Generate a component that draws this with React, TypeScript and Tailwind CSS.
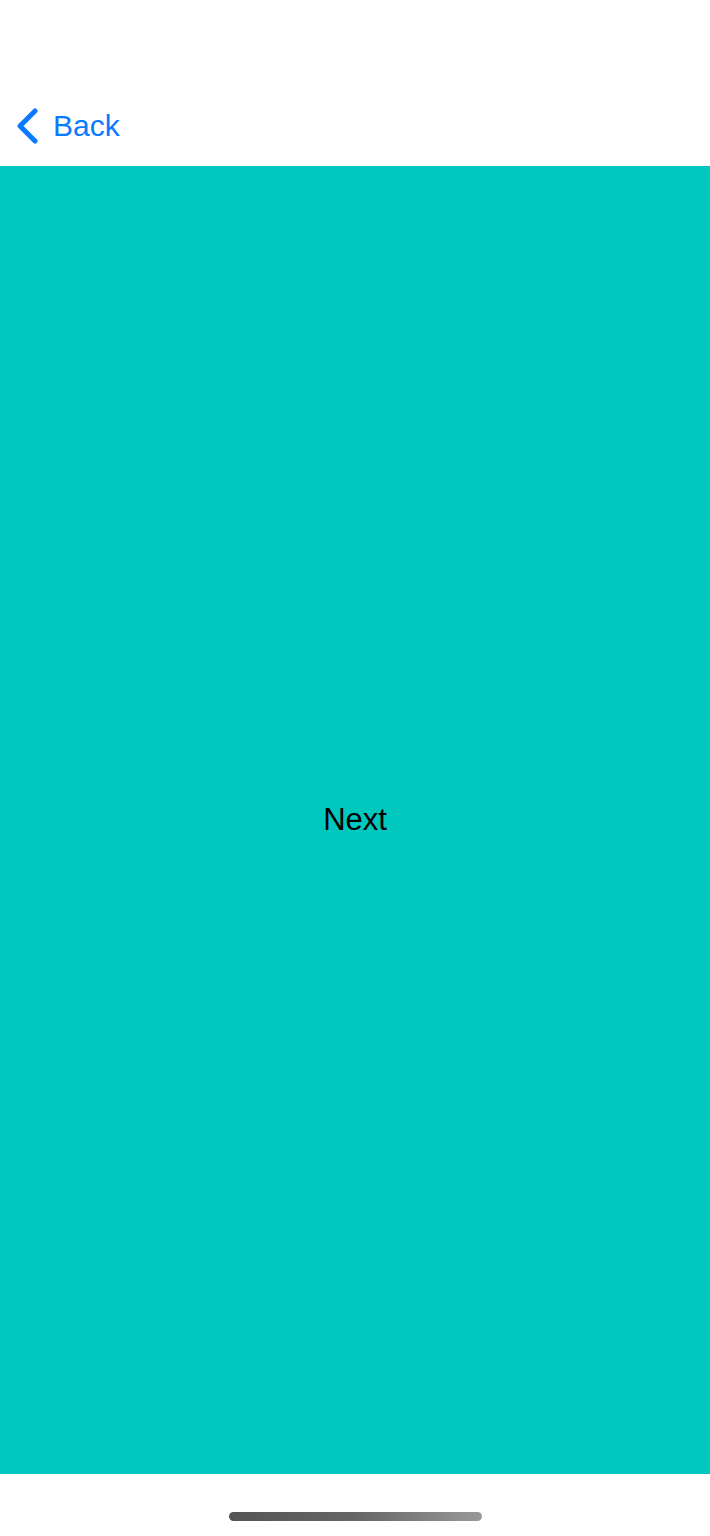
export default function App() {
  return (
    <div className="flex h-[1536px] w-[710px] flex-col bg-white" style={{ fontFamily: '"Liberation Sans", Arial, sans-serif' }}>
      <header className="flex h-[166px] items-end pb-[22px]">
        <button className="flex items-center gap-[14px] pl-[15px] text-[#0a7aff]">
          <svg width="24" height="36" viewBox="0 0 24 36" fill="none">
            <path d="M20 3 L5 18 L20 33" stroke="#0a7aff" strokeWidth="5" strokeLinecap="round" strokeLinejoin="round" />
          </svg>
          <span className="text-[30px] leading-none">Back</span>
        </button>
      </header>
      <main className="flex h-[1308px] items-center justify-center bg-[#00c8be]">
        <span className="text-[31px] text-black">Next</span>
      </main>
      <footer className="flex flex-1 items-start justify-center pt-[38px]">
        <div className="h-[9px] w-[253px] rounded-full bg-gradient-to-r from-[#555] via-[#666] to-[#999]" />
      </footer>
    </div>
  )
}
